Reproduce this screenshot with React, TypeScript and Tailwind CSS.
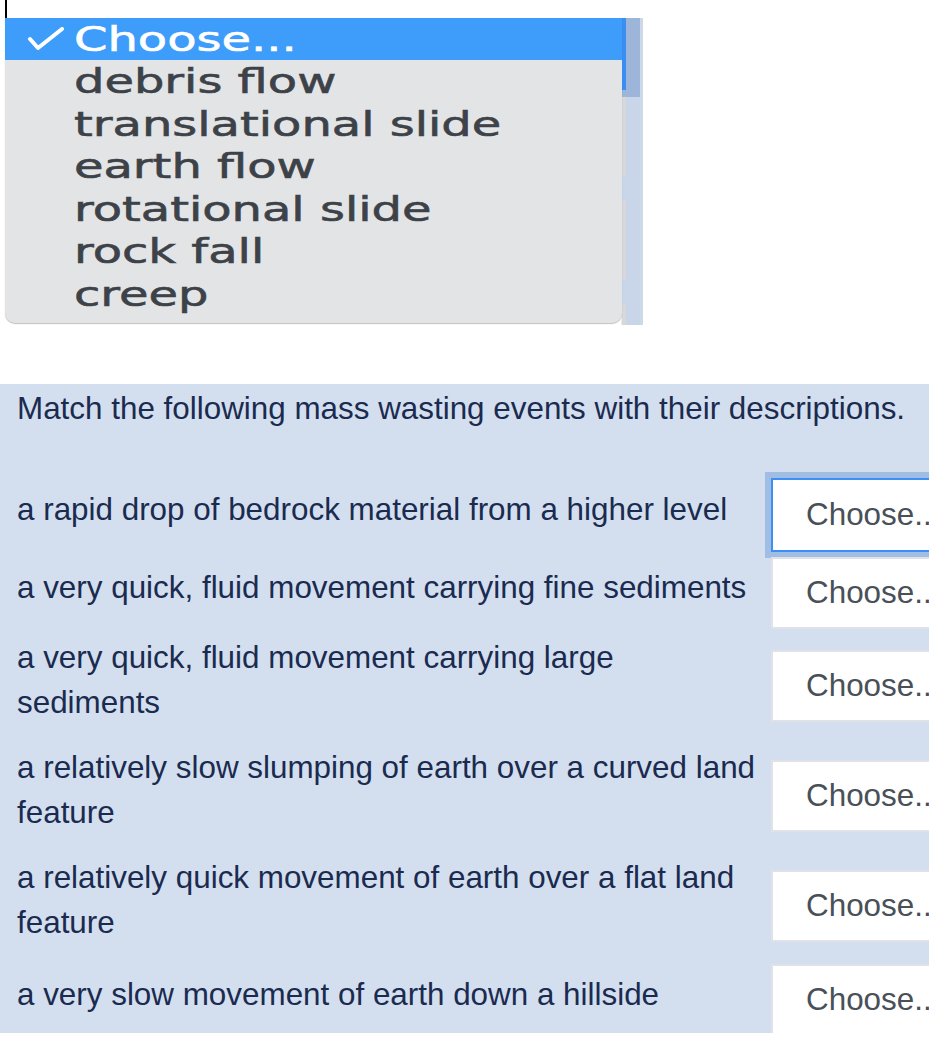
import React from "react";

const menuItems = [
  "debris flow",
  "translational slide",
  "earth flow",
  "rotational slide",
  "rock fall",
  "creep",
];

type Row = { lines: string; h: string; focused?: boolean };

const rows: Row[] = [
  { lines: "a rapid drop of bedrock material from a higher level", h: "h-[78px]", focused: true },
  { lines: "a very quick, fluid movement carrying fine sediments", h: "h-[78px]" },
  { lines: "a very quick, fluid movement carrying large sediments", h: "h-[108px]" },
  { lines: "a relatively slow slumping of earth over a curved land feature", h: "h-[112px]" },
  { lines: "a relatively quick movement of earth over a flat land feature", h: "h-[108px]" },
  { lines: "a very slow movement of earth down a hillside", h: "h-[80px]" },
];

function MenuText({ children, white }: { children: React.ReactNode; white?: boolean }) {
  return (
    <span
      className={`inline-block origin-left scale-x-[1.41] whitespace-nowrap text-[34px] leading-[42px] [-webkit-text-stroke:0.6px_currentColor] ${
        white ? "text-white" : "text-[#3d4249]"
      }`}
      style={{ fontFamily: '"DejaVu Sans", sans-serif' }}
    >
      {children}
    </span>
  );
}

export default function App() {
  return (
    <div className="min-h-[1054px] w-[940px] bg-white" style={{ fontFamily: '"Liberation Sans", Arial, sans-serif' }}>
      {/* Top: open dropdown */}
      <div className="relative h-[384px]">
        <div className="ml-[5px] h-[18px] w-[2px] bg-black" />
        {/* page content peeking from behind the menu */}
        <div className="ml-[621px] flex h-[307px] w-[22px] bg-[#c9d6e9]">
          <div className="w-[1px] bg-[#eeeeee]" />
          <div className="flex w-[4px] flex-col">
            <div className="h-[72px] bg-[#3b8ff4]" />
            <div className="h-[7px] bg-[#9db5d8]" />
            <div className="h-[80px] bg-[#d6d8dc]" />
            <div className="h-[23px]" />
            <div className="h-[80px] bg-[#d6d8dc]" />
            <div className="h-[23px]" />
            <div className="h-[22px] bg-[#d6d8dc]" />
          </div>
          <div className="flex w-[14px] flex-col">
            <div className="h-[79px] bg-[#9db5d8]" />
          </div>
          <div className="w-[3px] bg-[#cdd8e9]" />
        </div>

        <div className="absolute left-[5px] top-[18px] flex h-[305px] w-[617px] flex-col overflow-hidden rounded-b-[10px] bg-[#e3e4e6] shadow-[0_1px_1px_rgba(0,0,0,0.25)]">
          <div className="flex h-[42px] items-center bg-[#3e9cfa]">
            <div className="ml-[23px] flex w-[46px] items-center">
              <svg width="38" height="24" viewBox="0 0 38 24" fill="none">
                <path d="M2 12 L10 21 L34 2" stroke="white" strokeWidth="4" strokeLinecap="round" strokeLinejoin="round" />
              </svg>
            </div>
            <MenuText white>Choose...</MenuText>
          </div>
          {menuItems.map((m) => (
            <div key={m} className="flex h-[42.5px] items-center pl-[69px]">
              <MenuText>{m}</MenuText>
            </div>
          ))}
        </div>
      </div>

      {/* Bottom: question panel */}
      <div className="h-[649px] w-[929px] overflow-hidden bg-[#d3dfef] text-[31.4px] text-[#1b2b4f]">
        <div className="h-[50px] pl-[17px] leading-[50px]">
          Match the following mass wasting events with their descriptions.
        </div>
        <div className="mt-[42px] flex flex-col">
          {rows.map((r, i) => (
            <div key={i} className={`flex items-center ${r.h}`}>
              <div className="mb-[12px] w-[761px] shrink-0 pl-[17px] leading-[45px]">{r.lines}</div>
              <div
                className={`ml-[10px] flex w-[200px] shrink-0 items-center bg-white pl-[33px] text-[#495057] ${
                  r.focused
                    ? "h-[74px] border-2 border-[#3d8ff5] shadow-[0_0_0_6px_#a0bde3]"
                    : "h-[72px] border-2 border-[#dfe2e6]"
                }`}
              >
                <span className="whitespace-nowrap">Choose..</span>
              </div>
            </div>
          ))}
        </div>
      </div>
    </div>
  );
}
